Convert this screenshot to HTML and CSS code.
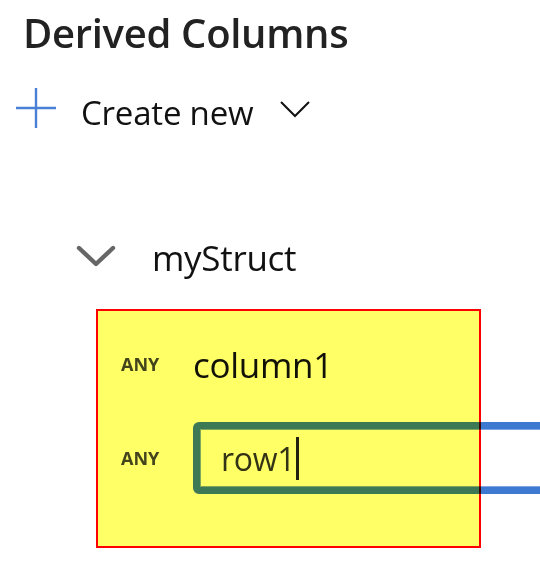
FILE: index.html
```html
<!DOCTYPE html>
<html lang="en">
<head>
    <meta charset="UTF-8">
    <meta name="viewport" content="width=device-width, initial-scale=1.0">
    <title>Derived Columns</title>
    <link rel="stylesheet" href="styles.css">
</head>
<body>

    <div class="panel">
        <h1 class="title">Derived Columns</h1>

        <!-- Create new button with dropdown -->
        <div class="create-row">
            <svg class="plus-icon" width="40" height="40" viewBox="0 0 40 40">
                <path d="M20 0 V40 M0 20 H40" stroke="#4a7fd6" stroke-width="2.4" fill="none"/>
            </svg>
            <span class="create-text">Create new</span>
            <svg class="small-chevron" width="30" height="18" viewBox="0 0 30 18">
                <path d="M1 2 L15 16 L29 2" stroke="#111" stroke-width="2" fill="none"/>
            </svg>
        </div>

        <!-- Struct group -->
        <div class="struct-row">
            <svg class="struct-chevron" width="40" height="22" viewBox="0 0 40 22">
                <path d="M3 3 L20 19 L37 3" stroke="#666" stroke-width="4.4" fill="none" stroke-linecap="round" stroke-linejoin="round"/>
            </svg>
            <span class="struct-name">myStruct</span>
        </div>

        <div class="fields">
            <div class="field-row">
                <span class="type-tag">ANY</span>
                <span class="field-name">column1</span>
            </div>
            <div class="field-row">
                <span class="type-tag">ANY</span>
                <div class="field-input">
                    <span class="input-text">row1</span><span class="caret"></span>
                </div>
            </div>
        </div>
    </div>

    <!-- highlight box over the struct fields -->
    <div class="highlight"></div>

</body>
</html>
```

FILE: styles.css
```css
body {
    margin: 0;
    padding: 0;
    background-color: #fff;
    font-family: 'Open Sans', 'Noto Sans', sans-serif;
    overflow: hidden;
    width: 540px;
    height: 564px;
}
.panel {
    padding-top: 4px;
}
.title {
    margin: 0;
    padding-left: 23px;
    font-size: 40px;
    font-weight: 600;
    line-height: 58px;
    color: #222;
    letter-spacing: -0.3px;
}
.create-row {
    display: flex;
    align-items: center;
    height: 48px;
    margin-top: 22px;
    padding-left: 16px;
}
.plus-icon {
    flex: none;
}
.create-text {
    margin-left: 25px;
    margin-top: 8px;
    font-size: 33px;
    color: #111;
    letter-spacing: -0.2px;
}
.small-chevron {
    margin-left: 27px;
    margin-top: 2px;
}
.struct-row {
    display: flex;
    align-items: center;
    height: 50px;
    margin-top: 99px;
    padding-left: 76px;
}
.struct-name {
    margin-left: 36px;
    margin-top: 2px;
    font-size: 35px;
    color: #111;
    letter-spacing: -0.3px;
}
.fields {
    margin-top: 56px;
    padding-left: 121px;
}
.field-row {
    display: flex;
    align-items: center;
    height: 54px;
    margin-bottom: 40px;
}
.type-tag {
    width: 72px;
    flex: none;
    font-size: 18px;
    font-weight: 700;
    color: #444;
}
.field-name {
    font-size: 35px;
    color: #111;
    letter-spacing: -0.3px;
}
.field-input {
    display: flex;
    align-items: center;
    width: 420px;
    height: 58px;
    flex: none;
    border: 7px solid #3d79d1;
    border-radius: 6px;
    box-shadow: inset 0 0 0 1px #7fa6e3;
    padding-left: 21px;
}
.input-text {
    font-size: 32px;
    color: #333;
    letter-spacing: -0.3px;
}
.caret {
    width: 3px;
    height: 43px;
    margin-left: 1px;
    background-color: #222;
}
.highlight {
    position: absolute;
    left: 96px;
    top: 309px;
    width: 381px;
    height: 235px;
    border: 2px solid #ff0000;
    background-color: #ffff66;
    mix-blend-mode: multiply;
}
```
